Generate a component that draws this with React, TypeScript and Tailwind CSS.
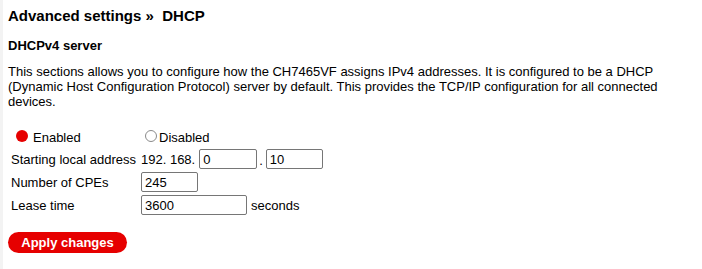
import React from "react";

const font = { fontFamily: '"Liberation Sans", Arial, sans-serif' };

function Input({ value, w }: { value: string; w: string }) {
  return (
    <div
      className={`${w} h-[20px] border border-[#767676] rounded-[2px] bg-white pl-[3px] flex items-center text-[13px] leading-[15px] text-black`}
    >
      {value}
    </div>
  );
}

export default function App() {
  return (
    <div
      className="w-[702px] h-[269px] bg-white border-l-[3px] border-[#f3f3f3] pl-[5px] pr-[8px] text-black overflow-hidden"
      style={font}
    >
      <div className="pt-[7px] text-[15px] leading-[17px] font-bold">
        Advanced settings »&nbsp;&nbsp;DHCP
      </div>
      <div className="mt-[14px] text-[13px] leading-[15px] font-bold">DHCPv4 server</div>
      <p className="mt-[11px] text-[13px] leading-[15px]">
        This sections allows you to configure how the CH7465VF assigns IPv4 addresses. It is
        configured to be a DHCP (Dynamic Host Configuration Protocol) server by default. This
        provides the TCP/IP configuration for all connected devices.
      </p>

      <div className="mt-[17px] flex flex-col gap-[3px] text-[13px] leading-[15px]">
        <div className="flex items-center h-[20px]">
          <div className="w-[133px] flex items-center pl-[8px]">
            <span className="w-[12px] h-[12px] rounded-full bg-[#e60000] inline-block" />
            <span className="ml-[5px] pt-[3px]">Enabled</span>
          </div>
          <div className="flex items-center pl-[4px]">
            <span className="w-[12px] h-[12px] rounded-full border border-[#8a8a8a] bg-white inline-block" />
            <span className="ml-[2px] pt-[3px]">Disabled</span>
          </div>
        </div>

        <div className="flex items-center h-[20px]">
          <div className="w-[133px] pl-[3px]">Starting local address</div>
          <span>192. 168.</span>
          <div className="ml-[4px]">
            <Input value="0" w="w-[58px]" />
          </div>
          <span className="mx-[2px] self-end pb-[1px]">.</span>
          <div className="ml-[1px]">
            <Input value="10" w="w-[57px]" />
          </div>
        </div>

        <div className="flex items-center h-[20px]">
          <div className="w-[133px] pl-[3px]">Number of CPEs</div>
          <Input value="245" w="w-[57px]" />
        </div>

        <div className="flex items-center h-[20px]">
          <div className="w-[133px] pl-[3px]">Lease time</div>
          <Input value="3600" w="w-[106px]" />
          <span className="ml-[4px]">seconds</span>
        </div>
      </div>

      <button className="mt-[17px] h-[21px] w-[119px] rounded-full bg-[#e60000] text-white font-bold text-[13px] leading-[15px] flex items-center justify-center">
        Apply changes
      </button>
    </div>
  );
}
